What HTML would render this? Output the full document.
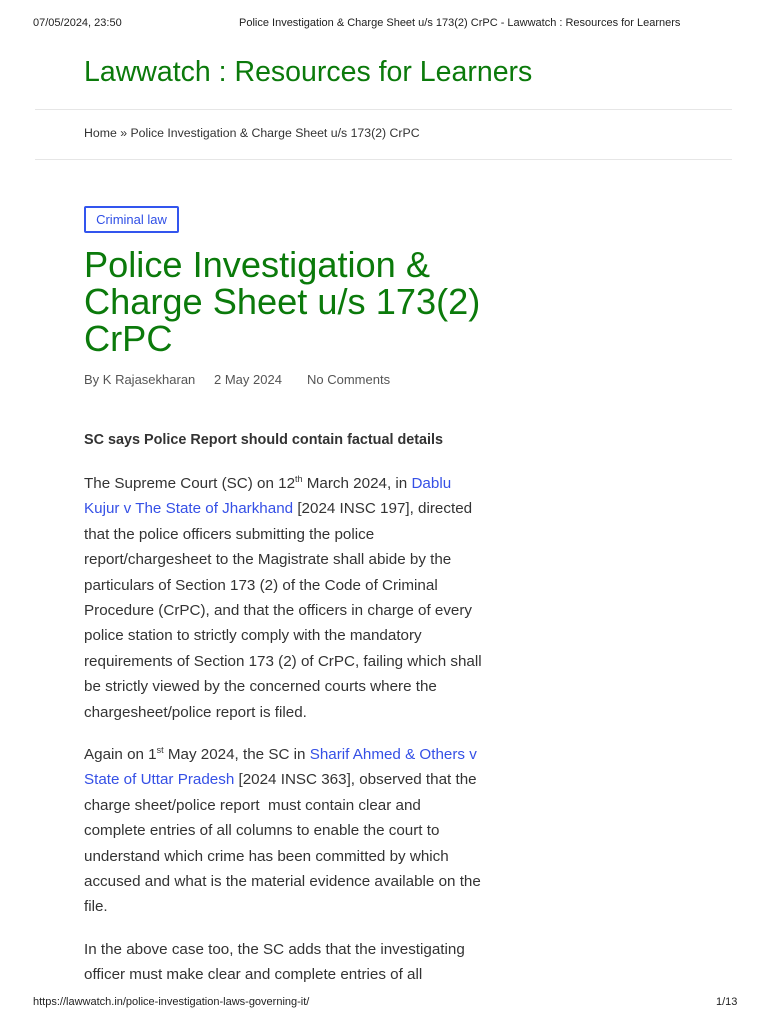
<!DOCTYPE html>
<html><head><meta charset="utf-8"><style>
body{margin:0;width:768px;height:1024px;background:#fff;font-family:"Liberation Sans",sans-serif;position:relative;overflow:hidden;color:#333}
.a{position:absolute;white-space:nowrap}
.hdr{font-size:11px;color:#222}
.site{left:84px;top:56px;font-size:28.5px;color:#0b7a0b}
.hr{position:absolute;left:35px;width:697px;height:1px;background:#e6e6e6}
.bc{left:84px;top:126px;font-size:12.3px;color:#333}
.tag{left:84px;top:206px;width:91px;height:23px;border:2px solid #3355ee;border-radius:2px;color:#2f4fe6;font-size:13px;line-height:23px;text-align:center}
.t{left:84px;font-size:36.2px;color:#0b7a0b;line-height:37px}
.meta{top:372px;font-size:13px;color:#555}
.p{left:84px;font-size:15.2px;line-height:25.4px;color:#333}
.l{color:#3550e6}
sup{font-size:9px;line-height:0}
</style></head><body>
<div class="a hdr" style="left:33px;top:17px">07/05/2024, 23:50</div>
<div class="a hdr" style="left:239px;top:17px">Police Investigation &amp; Charge Sheet u/s 173(2) CrPC - Lawwatch : Resources for Learners</div>
<div class="a site">Lawwatch : Resources for Learners</div>
<div class="hr" style="top:109px"></div>
<div class="a bc">Home » Police Investigation &amp; Charge Sheet u/s 173(2) CrPC</div>
<div class="hr" style="top:159px"></div>
<div class="a tag">Criminal law</div>
<div class="a t" style="top:246px">Police Investigation &amp;<br>Charge Sheet u/s 173(2)<br>CrPC</div>
<div class="a meta" style="left:84px">By K Rajasekharan</div>
<div class="a meta" style="left:214px">2 May 2024</div>
<div class="a meta" style="left:307px">No Comments</div>
<div class="a p" style="top:428px;font-weight:bold;font-size:14.4px">SC says Police Report should contain factual details</div>
<div class="a p" style="top:471px">The Supreme Court (SC) on 12<sup>th</sup> March 2024, in <span class="l">Dablu</span><br><span class="l">Kujur v The State of Jharkhand</span> [2024 INSC 197], directed<br>that the police officers submitting the police<br>report/chargesheet to the Magistrate shall abide by the<br>particulars of Section 173 (2) of the Code of Criminal<br>Procedure (CrPC), and that the officers in charge of every<br>police station to strictly comply with the mandatory<br>requirements of Section 173 (2) of CrPC, failing which shall<br>be strictly viewed by the concerned courts where the<br>chargesheet/police report is filed.</div>
<div class="a p" style="top:742px">Again on 1<sup>st</sup> May 2024, the SC in <span class="l">Sharif Ahmed &amp; Others v</span><br><span class="l">State of Uttar Pradesh</span> [2024 INSC 363], observed that the<br>charge sheet/police report &nbsp;must contain clear and<br>complete entries of all columns to enable the court to<br>understand which crime has been committed by which<br>accused and what is the material evidence available on the<br>file.</div>
<div class="a p" style="top:937px">In the above case too, the SC adds that the investigating<br>officer must make clear and complete entries of all</div>
<div class="a hdr" style="left:33px;top:996px;background:#fff">https://lawwatch.in/police-investigation-laws-governing-it/</div>
<div class="a hdr" style="left:716px;top:996px">1/13</div>
</body></html>
